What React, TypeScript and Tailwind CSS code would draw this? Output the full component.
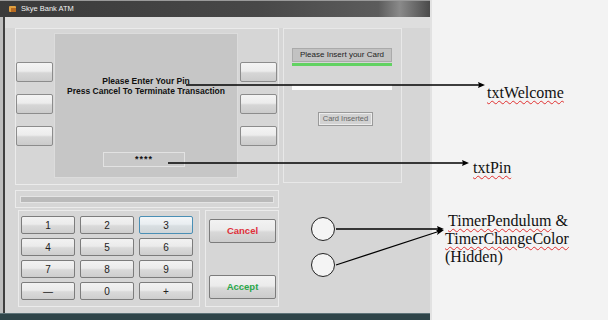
import React from "react";

const keys = ["1", "2", "3", "4", "5", "6", "7", "8", "9", "—", "0", "+"];

function SideButton() {
  return (
    <div className="h-[20px] w-[37px] rounded-[2px] border border-[#8c8c8c] bg-[linear-gradient(#f4f4f4,#ececec_45%,#d6d6d6_55%,#cbcbcb)]" />
  );
}

function Key({ label }: { label: string }) {
  const focused = label === "3";
  return (
    <div
      className={
        focused
          ? "flex h-[18px] w-[54px] items-center justify-center rounded-[2px] border border-[#4a8fb5] bg-[linear-gradient(#f3f6f8,#e9eef1_45%,#d9dfe2_55%,#cfd5d8)] text-[10px] text-[#222]"
          : "flex h-[18px] w-[54px] items-center justify-center rounded-[2px] border border-[#7c7c7c] bg-[linear-gradient(#f2f2f2,#ebebeb_45%,#dadada_55%,#cecece)] text-[10px] text-[#222]"
      }
    >
      {label}
    </div>
  );
}

export default function App() {
  return (
    <div className="relative flex h-[320px] w-[608px] overflow-hidden bg-[#f3f3f3] font-['Liberation_Sans',Arial,sans-serif]">
      {/* window */}
      <div className="flex h-full w-[430px] flex-col bg-[#cfcfcf]">
        <div className="flex h-[17px] items-center gap-[4px] border-t border-[#9a9a9a] bg-[linear-gradient(90deg,#3a3a3a,#484848_60%,#5c5c5c_88%,#8a8a8a_93%,#4a4a4a)] pl-[9px]">
          <svg width="8" height="8" viewBox="0 0 8 8">
            <rect x="0" y="1" width="7" height="6" rx="1" fill="#e0a040" />
            <rect x="2" y="3" width="5" height="4" fill="#b86a20" />
          </svg>
          <span className="text-[7.5px] text-[#f0f0f0]">Skye Bank ATM</span>
        </div>

        <div className="flex flex-1">
          <div className="w-[5px] border-r-2 border-[#3f3f3f] bg-[#bdbdbd]" />
          <div className="flex flex-1 flex-col border-t-[11px] border-[#dedede] bg-[#d6d6d6] pl-[10px]">
            {/* row 1 */}
            <div className="flex gap-[4px]">
              <div className="flex h-[157px] w-[264px] border border-[#ebebeb]">
                <div className="flex flex-col gap-[12px] pt-[33px]">
                  <SideButton />
                  <SideButton />
                  <SideButton />
                </div>
                <div className="ml-[1px] mt-[4px] flex h-[145px] w-[184px] flex-col border border-[#dcdcdc] bg-[#c6c6c6] pt-[42px]">
                  <p className="text-center text-[8.5px] font-bold leading-[10px] text-[#111]">
                    Please Enter Your Pin
                  </p>
                  <p className="text-center text-[8.5px] font-bold leading-[10px] text-[#111]">
                    Press Cancel To Terminate Transaction
                  </p>
                  <div className="ml-[48px] mt-[56px] flex h-[15px] w-[82px] items-center justify-center border border-[#e2e2e2] bg-[#c9c9c9] text-[9px] font-bold tracking-[1px] text-[#111]">
                    ****
                  </div>
                </div>
                <div className="ml-[2px] flex flex-col gap-[12px] pt-[33px]">
                  <SideButton />
                  <SideButton />
                  <SideButton />
                </div>
              </div>

              <div className="flex h-[155px] w-[119px] flex-col border border-[#e8e8e8] pl-[8px] pt-[19px]">
                <div className="flex h-[14px] w-[100px] items-center justify-center border border-[#aaaaaa] bg-[#c2c2c2] text-[8px] text-[#222]">
                  Please Insert your Card
                </div>
                <div className="mt-[1px] h-[3px] w-[100px] bg-[#62d262]" />
                <div className="mt-[19px] h-[5px] w-[100px] bg-[#fbfbfb]" />
                <div className="ml-[26px] mt-[22px] flex h-[14px] w-[55px] items-center justify-center border border-[#9a9a9a] bg-[#d2d2d2] text-[7.5px] text-[#666] shadow-[inset_0_0_0_1px_#ececec]">
                  Card Inserted
                </div>
              </div>
            </div>

            {/* row 2 */}
            <div className="mt-[5px] flex h-[18px] w-[264px] items-center border border-[#ebebeb] px-[4px]">
              <div className="h-[7px] w-full border border-[#e4e4e4] bg-[#bababa]" />
            </div>

            {/* row 3 */}
            <div className="mt-[2px] flex">
              <div className="ml-[3px] h-[97px] w-[182px] border border-[#ebebeb] pl-[2px] pt-[5px]">
                <div className="grid grid-cols-[54px_54px_54px] gap-x-[5px] gap-y-[4px]">
                  {keys.map((k) => (
                    <Key key={k} label={k} />
                  ))}
                </div>
              </div>
              <div className="ml-[5px] flex h-[97px] w-[74px] flex-col border border-[#ebebeb] pl-[3px] pt-[8px]">
                <div className="flex h-[24px] w-[67px] items-center justify-center rounded-[2px] border border-[#7c7c7c] bg-[linear-gradient(#f2f2f2,#ebebeb_45%,#d8d8d8_55%,#cccccc)] text-[9.5px] font-bold text-[#e0303a]">
                  Cancel
                </div>
                <div className="mt-[32px] flex h-[24px] w-[67px] items-center justify-center rounded-[2px] border border-[#7c7c7c] bg-[linear-gradient(#f2f2f2,#ebebeb_45%,#d8d8d8_55%,#cccccc)] text-[9.5px] font-bold text-[#2aa84a]">
                  Accept
                </div>
              </div>
              <div className="ml-[32px] flex flex-col gap-[12px] pt-[7px]">
                <div className="h-[24px] w-[24px] rounded-full border border-[#222] bg-[#f4f4f4]" />
                <div className="h-[24px] w-[24px] rounded-full border border-[#222] bg-[#f4f4f4]" />
              </div>
            </div>
          </div>
        </div>

        <div className="h-[7px] border-t border-[#5f7479] bg-[#2f4549]" />
      </div>
      <div className="w-[2px] bg-[#e2e2e2]" />
      <div className="flex-1" />

      {/* annotation arrows */}
      <svg className="pointer-events-none absolute left-0 top-0" width="608" height="320">
        <g stroke="#000" strokeWidth="1.3" fill="none">
          <line x1="186" y1="85" x2="481" y2="85" />
          <line x1="168" y1="163" x2="465" y2="163" />
          <line x1="336" y1="229" x2="440" y2="229" />
          <line x1="336" y1="265" x2="440" y2="231" />
        </g>
        <g fill="#000">
          <polygon points="485,85 478,82 479,85 478,88" />
          <polygon points="469,163 462,160 463,163 462,166" />
          <polygon points="444,229 437,226 438,229 437,232" />
          <polygon points="444,230 436,230 438,232 437,235" />
        </g>
      </svg>

      {/* annotation labels */}
      <div className="absolute left-[487px] top-[84px] font-['Liberation_Serif','Times_New_Roman',serif] text-[16px] leading-[18px] text-[#111]">
        <span className="underline decoration-[#e03030] decoration-wavy decoration-1 underline-offset-2">txtWelcome</span>
      </div>
      <div className="absolute left-[473px] top-[159px] font-['Liberation_Serif','Times_New_Roman',serif] text-[16px] leading-[18px] text-[#111]">
        <span className="underline decoration-[#e03030] decoration-wavy decoration-1 underline-offset-2">txtPin</span>
      </div>
      <div className="absolute left-[445px] top-[212px] flex flex-col font-['Liberation_Serif','Times_New_Roman',serif] text-[16px] leading-[18px] text-[#111]">
        <span className="pl-[3px]">
          <span className="underline decoration-[#e03030] decoration-wavy decoration-1 underline-offset-2">TimerPendulum</span> &amp;
        </span>
        <span className="underline decoration-[#e03030] decoration-wavy decoration-1 underline-offset-2">TimerChangeColor</span>
        <span>(Hidden)</span>
      </div>
    </div>
  );
}
